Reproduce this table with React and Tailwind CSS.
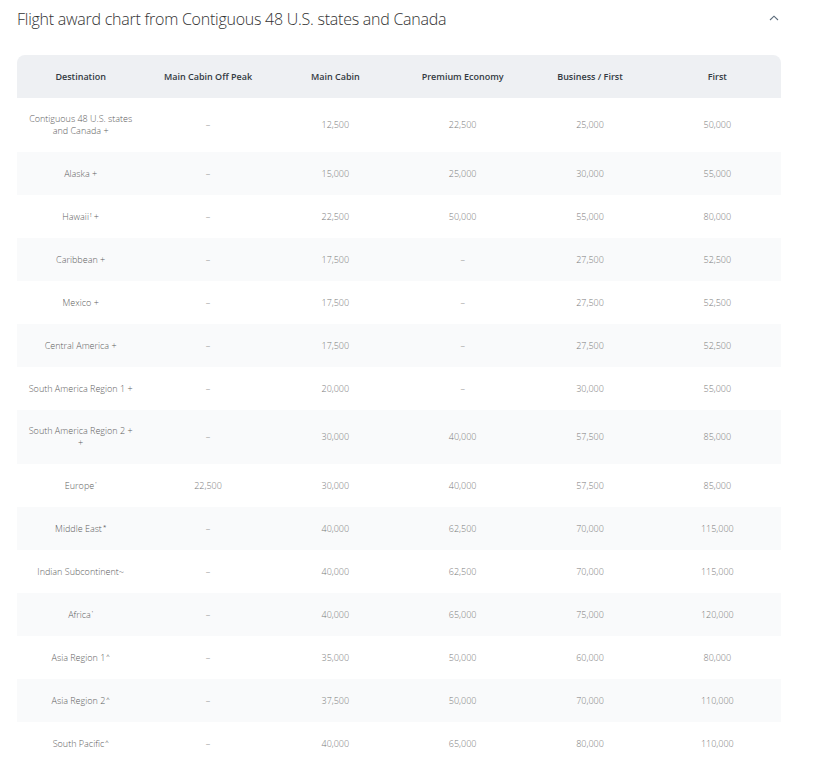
import React from "react";

const rows = [
  { d: ["Contiguous 48 U.S. states", "and Canada +"], v: ["–", "12,500", "22,500", "25,000", "50,000"], tall: true },
  { d: ["Alaska +"], v: ["–", "15,000", "25,000", "30,000", "55,000"] },
  { d: ["Hawaii"], s: "!", t: " +", v: ["–", "22,500", "50,000", "55,000", "80,000"] },
  { d: ["Caribbean +"], v: ["–", "17,500", "–", "27,500", "52,500"] },
  { d: ["Mexico +"], v: ["–", "17,500", "–", "27,500", "52,500"] },
  { d: ["Central America +"], v: ["–", "17,500", "–", "27,500", "52,500"] },
  { d: ["South America Region 1 +"], v: ["–", "20,000", "–", "30,000", "55,000"] },
  { d: ["South America Region 2 +", "+"], v: ["–", "30,000", "40,000", "57,500", "85,000"], tall: true },
  { d: ["Europe"], s: "'", v: ["22,500", "30,000", "40,000", "57,500", "85,000"] },
  { d: ["Middle East"], s: "*", v: ["–", "40,000", "62,500", "70,000", "115,000"] },
  { d: ["Indian Subcontinent~"], v: ["–", "40,000", "62,500", "70,000", "115,000"] },
  { d: ["Africa"], s: "'", v: ["–", "40,000", "65,000", "75,000", "120,000"] },
  { d: ["Asia Region 1"], s: "^", v: ["–", "35,000", "50,000", "60,000", "80,000"] },
  { d: ["Asia Region 2"], s: "^", v: ["–", "37,500", "50,000", "70,000", "110,000"] },
  { d: ["South Pacific"], s: "^", v: ["–", "40,000", "65,000", "80,000", "110,000"] },
];

const heads = ["Destination", "Main Cabin Off Peak", "Main Cabin", "Premium Economy", "Business / First", "First"];

export default function App() {
  return (
    <div className="min-h-[767px] w-[825px] bg-white" style={{ fontFamily: '"Open Sans", "Liberation Sans", sans-serif' }}>
      <div className="flex items-center justify-between pl-[17px] pr-[46px] pt-[4px] h-[34px]">
        <h2 className="text-[16px] font-light text-[#333] tracking-[-0.25px]">
          Flight award chart from Contiguous 48 U.S. states and Canada
        </h2>
        <svg width="10" height="6" viewBox="0 0 10 6" className="mt-[-2px]">
          <path d="M1 5 L5 1.2 L9 5" fill="none" stroke="#5b6b7b" strokeWidth="1.1" />
        </svg>
      </div>
      <div className="ml-[17px] mt-[21px] w-[764px]">
        <div className="grid grid-cols-6 h-[43px] items-center rounded-t-[8px] bg-[#eef0f3]">
          {heads.map((h) => (
            <div key={h} className="text-center text-[9px] font-semibold text-[#333a42]">
              {h}
            </div>
          ))}
        </div>
        {rows.map((r, i) => (
          <div
            key={i}
            className={`grid grid-cols-6 items-center ${r.tall ? "h-[54px]" : "h-[43px]"} ${i % 2 === 1 ? "bg-[#f9fafb]" : "bg-white"}`}
          >
            <div className="text-center text-[9px] leading-[12px] font-light text-[#5e5e5e]">
              {r.d.map((l, k) => (
                <div key={k}>
                  {l}
                  {r.s && k === r.d.length - 1 ? <sup className="text-[6px] ml-[1px] font-normal text-[#555]">{r.s}</sup> : null}
                  {r.t && k === r.d.length - 1 ? r.t : null}
                </div>
              ))}
            </div>
            {r.v.map((v, k) => (
              <div key={k} className="text-center text-[9px] font-light text-[#7a7a7a]">
                {v}
              </div>
            ))}
          </div>
        ))}
      </div>
    </div>
  );
}
